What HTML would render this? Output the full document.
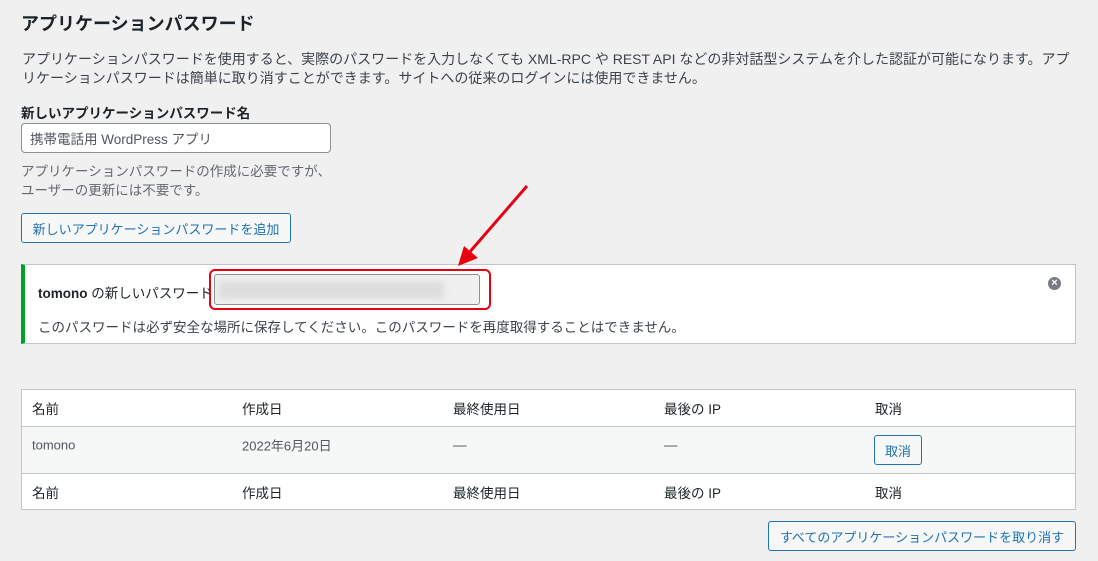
<!DOCTYPE html>
<html><head><meta charset="utf-8"><style>
*{box-sizing:border-box;margin:0;padding:0}
body{width:1098px;height:561px;background:#f0f0f1;font-family:"Liberation Sans","Noto Sans CJK JP",sans-serif;color:#1d2327;font-size:13px;position:relative;overflow:hidden}
.a{position:absolute;white-space:nowrap}
h2{position:absolute;left:21px;top:10px;font-size:18px;font-weight:bold;color:#1d2327}
.btn{position:absolute;border:1px solid #2271b1;border-radius:3px;background:#f6f7f7;color:#2271b1;font-size:13px;display:flex;align-items:center;justify-content:center}
.tbl{position:absolute;left:21px;top:389px;width:1055px;height:121px;border:1px solid #c3c4c7;background:#fff}
.row{position:absolute;left:0;width:100%}
.row span{position:absolute;top:50%;transform:translateY(-50%);font-size:13.5px}
</style></head><body>
<h2>アプリケーションパスワード</h2>
<div class="a" style="left:22px;top:50px;width:1058px;white-space:normal;font-size:14px;line-height:19px;color:#3c434a">アプリケーションパスワードを使用すると、実際のパスワードを入力しなくても XML-RPC や REST API などの非対話型システムを介した認証が可能になります。アプリケーションパスワードは簡単に取り消すことができます。サイトへの従来のログインには使用できません。</div>
<div class="a" style="left:21px;top:102px;font-weight:bold;font-size:13.5px">新しいアプリケーションパスワード名</div>
<div class="a" style="left:21px;top:123px;width:310px;height:30px;border:1px solid #8c8f94;border-radius:4px;background:#fff;padding:4px 8px;font-size:13.5px;color:#50575e">携帯電話用 WordPress アプリ</div>
<div class="a" style="left:21px;top:162px;line-height:19px;color:#646970;font-size:13.5px">アプリケーションパスワードの作成に必要ですが、<br>ユーザーの更新には不要です。</div>
<div class="btn" style="left:21px;top:213px;width:270px;height:30px">新しいアプリケーションパスワードを追加</div>
<div class="a" style="left:21px;top:264px;width:1055px;height:80px;background:#fff;border:1px solid #c3c4c7;border-left:4px solid #00a32a"></div>
<div class="a" style="left:38px;top:282px;font-size:13.5px"><b>tomono</b> の新しいパスワード:</div>
<div class="a" style="left:209px;top:269px;width:282px;height:41px;border:2px solid #e60012;border-radius:6px"></div>
<div class="a" style="left:214px;top:274px;width:266px;height:31px;border:1px solid #8c8f94;border-radius:3px;background:#f0f0f1"><div style="position:absolute;left:4px;top:6px;width:225px;height:18px;background:#ddd;filter:blur(3px)"></div></div>
<div class="a" style="left:38px;top:316px;font-size:13.5px;color:#3c434a">このパスワードは必ず安全な場所に保存してください。このパスワードを再度取得することはできません。</div>
<div class="a" style="left:1048px;top:277px;width:13px;height:13px;border-radius:50%;background:#787c82;color:#fff;font-size:11px;line-height:13px;text-align:center;font-weight:bold">×</div>
<svg class="a" style="left:440px;top:180px" width="100" height="95"><line x1="87" y1="6" x2="28" y2="74" stroke="#e60012" stroke-width="3"/><polygon points="18,86 24,66 38,78" fill="#e60012"/></svg>
<div class="tbl">
<div class="row" style="top:0;height:37px;border-bottom:1px solid #c3c4c7"><span style="left:10px">名前</span><span style="left:220px">作成日</span><span style="left:431px">最終使用日</span><span style="left:642px">最後の IP</span><span style="left:853px">取消</span></div>
<div class="row" style="top:37px;height:47px;background:#f6f7f7;border-bottom:1px solid #c3c4c7;color:#50575e"><span style="left:10px;top:18px;font-size:13px">tomono</span><span style="left:220px;top:18px;font-size:13px">2022年6月20日</span><span style="left:431px;top:18px">—</span><span style="left:642px;top:18px">—</span></div>
<div class="row" style="top:84px;height:36px"><span style="left:10px">名前</span><span style="left:220px">作成日</span><span style="left:431px">最終使用日</span><span style="left:642px">最後の IP</span><span style="left:853px">取消</span></div>
</div>
<div class="btn" style="left:874px;top:435px;width:48px;height:30px">取消</div>
<div class="btn" style="left:768px;top:521px;width:308px;height:30px">すべてのアプリケーションパスワードを取り消す</div>
</body></html>
